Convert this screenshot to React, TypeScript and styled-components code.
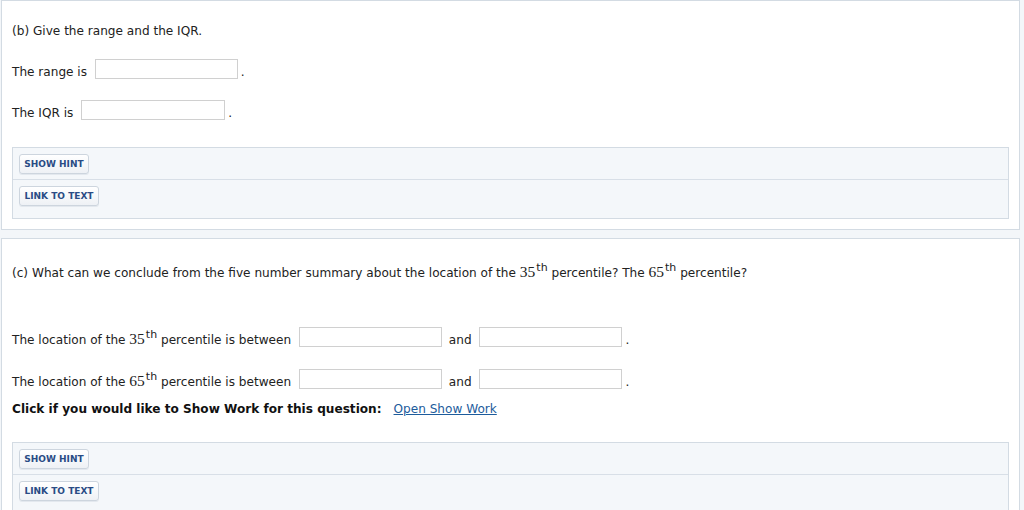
import React from "react";
import styled, { createGlobalStyle } from "styled-components";

const Global = createGlobalStyle`
  html, body { margin: 0; padding: 0; background: #f3f6f9; }
  body { font-family: "DejaVu Sans", Verdana, sans-serif; font-size: 12.1px; color: #222; }
`;

const Page = styled.div`
  padding: 0 4px 0 1px;
  display: flex;
  flex-direction: column;
  gap: 8px;
`;

const Panel = styled.section`
  background: #fff;
  border: 1px solid #d3dbe3;
  padding: 0 10px 10px 10px;
  display: flex;
  flex-direction: column;
`;

const Line = styled.div<{ $top: number }>`
  margin-top: ${(p) => p.$top}px;
  line-height: 16px;
  white-space: nowrap;
`;

const Field = styled.span<{ $w?: number }>`
  display: inline-block;
  width: ${(p) => p.$w ?? 142}px;
  height: 18px;
  border: 1px solid #d0d0d0;
  background: #fff;
  margin: 0 3px 0 4px;
  vertical-align: -3px;
`;

const Num = styled.span`
  font-family: "Liberation Serif", "Times New Roman", serif;
  font-size: 15.5px;
  line-height: 0;
`;

const Sup = styled.sup`
  font-size: 11px;
  line-height: 0;
  vertical-align: 6px;
  margin-left: 1px;
`;

const Bold = styled.span`
  font-weight: bold;
  color: #111;
`;

const Link = styled.a`
  color: #1d5c9c;
  text-decoration: underline;
  margin-left: 12px;
  cursor: pointer;
`;

const HintBox = styled.div<{ $top: number }>`
  margin-top: ${(p) => p.$top}px;
  background: #f4f7fa;
  border: 1px solid #d3dbe3;
  display: flex;
  flex-direction: column;
  padding-bottom: 7px;
`;

const HintRow = styled.div<{ $divider?: boolean }>`
  padding: 6px 6px 5px 6px;
  border-bottom: ${(p) => (p.$divider ? "1px solid #d8dfe7" : "none")};
  display: flex;
`;

const HintButton = styled.button<{ $w: number }>`
  width: ${(p) => p.$w}px;
  height: 20px;
  padding: 0;
  font-family: "DejaVu Sans", Verdana, sans-serif;
  font-weight: bold;
  font-size: 9px;
  color: #2a4c85;
  background: linear-gradient(#ffffff, #eef1f5);
  border: 1px solid #cdd5de;
  border-radius: 3px;
  box-shadow: 0 1px 0 #e3e8ee;
`;

const Hints = () => (
  <>
    <HintRow $divider>
      <HintButton $w={70}>SHOW HINT</HintButton>
    </HintRow>
    <HintRow>
      <HintButton $w={80}>LINK TO TEXT</HintButton>
    </HintRow>
  </>
);

const Ordinal = ({ n }: { n: string }) => (
  <>
    <Num>{n}</Num>
    <Sup>th</Sup>
  </>
);

export default function App() {
  return (
    <>
      <Global />
      <Page>
        <Panel>
          <Line $top={22}>(b) Give the range and the IQR.</Line>
          <Line $top={20}>
            The range is <Field $w={141} />.
          </Line>
          <Line $top={20}>
            The IQR is <Field $w={142} />.
          </Line>
          <HintBox $top={26}>
            <Hints />
          </HintBox>
        </Panel>
        <Panel>
          <Line $top={26}>
            (c) What can we conclude from the five number summary about the location of the{" "}
            <Ordinal n="35" /> percentile? The <Ordinal n="65" /> percentile?
          </Line>
          <Line $top={46}>
            The location of the <Ordinal n="35" /> percentile is between <Field $w={141} /> and{" "}
            <Field $w={141} />.
          </Line>
          <Line $top={21}>
            The location of the <Ordinal n="65" /> percentile is between <Field $w={141} /> and{" "}
            <Field $w={141} />.
          </Line>
          <Line $top={11}>
            <Bold>Click if you would like to Show Work for this question:</Bold>
            <Link>Open Show Work</Link>
          </Line>
          <HintBox $top={25}>
            <Hints />
          </HintBox>
        </Panel>
      </Page>
    </>
  );
}
